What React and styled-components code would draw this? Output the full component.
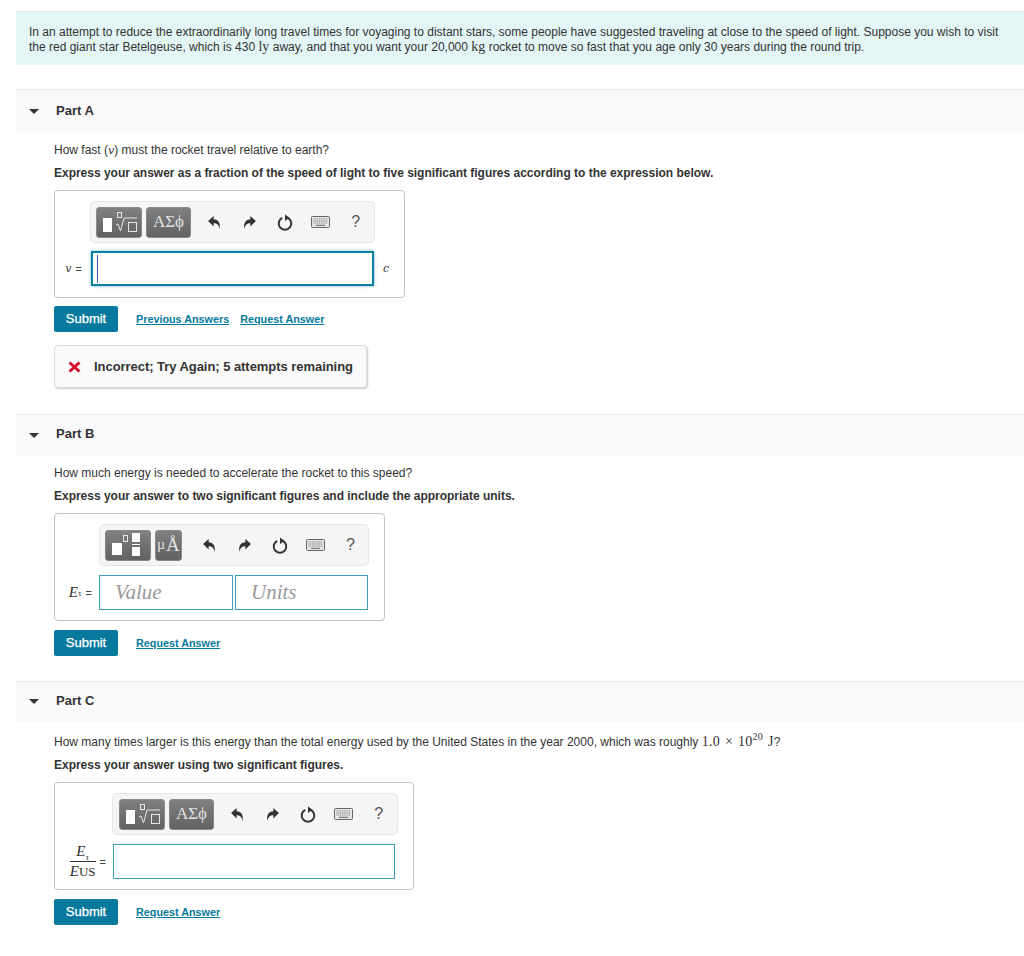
import React from "react";
import styled, { createGlobalStyle } from "styled-components";

const Global = createGlobalStyle`
  html, body { margin: 0; padding: 0; background: #fff; }
  body { font-family: "Liberation Sans", Arial, sans-serif; color: #333; font-size: 12px; }
`;

const Page = styled.div`
  padding: 11px 0 0 16px;
  height: 945px;
  overflow: hidden;
`;
const Intro = styled.div`
  background: #e4f5f6;
  border-top: 1px solid #dfe6e6;
  padding: 13px 24px 10px 13px;
  font-size: 12px;
  line-height: 15px;
  height: 30px;
  color: #333;
  white-space: nowrap;
`;
const Math = styled.span`
  font-family: "Liberation Serif", serif;
  font-size: 14px;
  line-height: 0;
`;
const MathExpr = styled(Math)`
  letter-spacing: 0.3px;
  word-spacing: 1px;
`;
const MathVar = styled.i`
  font-family: "DejaVu Serif", serif;
  font-size: 11px;
  line-height: 0;
`;
const Sup = styled.sup`
  font-size: 10px;
  line-height: 0;
`;
const PartSection = styled.section`
  margin-top: ${(p) => p.$top}px;
`;
const PartHeader = styled.div`
  box-sizing: border-box;
  display: flex;
  align-items: center;
  height: ${(p) => p.$height}px;
  background: #f9f9f9;
  border-top: 1px solid #ececec;
  padding: 0 0 ${(p) => p.$lift}px 13px;
  font-size: 13px;
  font-weight: bold;
  color: #333;
  gap: 17px;
`;
const Caret = styled.span`
  width: 0;
  height: 0;
  border-left: 5px solid transparent;
  border-right: 5px solid transparent;
  border-top: 5px solid #333;
  margin-top: 3px;
`;
const PartBody = styled.div`
  padding: ${(p) => p.$pad}px 0 0 38px;
`;
const Question = styled.p`
  margin: 0;
  font-size: 12px;
  line-height: 15px;
  white-space: nowrap;
`;
const Instruction = styled.p`
  margin: 8px 0 9px;
  font-size: 12px;
  line-height: 15px;
  font-weight: bold;
  letter-spacing: -0.015px;
  white-space: nowrap;
`;
const AnswerBox = styled.div`
  box-sizing: border-box;
  width: ${(p) => p.$width}px;
  height: 108px;
  border: 1px solid #c4c4c4;
  border-radius: 4px;
  padding: 10px 0 0 ${(p) => p.$left}px;
`;
const Toolbar = styled.div`
  box-sizing: border-box;
  display: flex;
  align-items: center;
  width: ${(p) => p.$width}px;
  height: 42px;
  padding-left: ${(p) => p.$pad}px;
  background: #f5f5f5;
  border: 1px solid #e6e6e6;
  border-radius: 5px;
`;
const TemplateButton = styled.div`
  box-sizing: border-box;
  display: flex;
  align-items: center;
  justify-content: center;
  width: ${(p) => p.$width}px;
  height: 31px;
  margin-right: 4px;
  border: 1px solid #8a8a8a;
  border-radius: 3px;
  background: linear-gradient(#808080, #626262);
  color: #e2e2e2;
  font-family: "Liberation Serif", serif;
  font-size: ${(p) => p.$size || 17}px;
  white-space: nowrap;
`;
const SmallMu = styled.span`
  font-size: 14px;
  margin-right: 1px;
`;
const Tools = styled.div`
  display: flex;
  align-items: center;
  margin-left: ${(p) => p.$gap}px;
`;
const Tool = styled.div`
  display: flex;
  align-items: center;
  justify-content: center;
  width: 35.25px;
  height: 24px;
  color: #333;
`;
const Help = styled.span`
  font-size: 16px;
  color: #555;
`;
const AnswerRow = styled.div`
  display: flex;
  align-items: center;
  margin-top: ${(p) => p.$top}px;
  height: 35px;
`;
const Label = styled.div`
  flex: none;
  display: flex;
  align-items: center;
  justify-content: flex-end;
  box-sizing: border-box;
  width: ${(p) => p.$width}px;
  margin-left: ${(p) => -p.$width}px;
  padding-right: ${(p) => p.$pad}px;
  font-family: "Liberation Serif", serif;
  font-size: 13px;
  color: #333;
  white-space: nowrap;
`;
const Equal = styled.span`
  margin-left: 4px;
  font-family: "Liberation Sans", sans-serif;
  font-size: 11px;
  color: #444;
`;
const MathItalic = styled.i`
  font-family: "DejaVu Serif", serif;
  font-size: 11px;
`;
const MathCap = styled.i`
  font-family: "Liberation Serif", serif;
  font-size: 15px;
`;
const Sub = styled.sub`
  font-size: 9px;
  line-height: 0;
`;
const Fraction = styled.span`
  display: inline-flex;
  flex-direction: column;
  align-items: center;
`;
const FracTop = styled.span`
  align-self: stretch;
  text-align: center;
  padding: 0 0 2px;
  border-bottom: 1px solid #333;
  line-height: 14px;
`;
const FracBottom = styled.span`
  padding: 2px 0 0;
  line-height: 14px;
`;
const Field = styled.div`
  box-sizing: border-box;
  display: flex;
  align-items: center;
  width: ${(p) => p.$width}px;
  height: 35px;
  margin-left: ${(p) => p.$left || 0}px;
  background: #fff;
  border: ${(p) => (p.$focus ? "2px solid #0b7ea3" : "1px solid #3f9db8")};
  box-shadow: ${(p) => (p.$focus ? "0 0 3px rgba(11,126,163,.6)" : "none")};
  padding-left: 15px;
  font-family: "Liberation Serif", serif;
  font-style: italic;
  font-size: 21px;
  color: #999;
`;
const TextCaret = styled.span`
  width: 1px;
  height: 28px;
  margin-left: -11px;
  background: #3a5fbf;
`;
const Unit = styled.i`
  margin-left: 9px;
  font-family: "DejaVu Serif", serif;
  font-size: 11px;
`;
const Actions = styled.div`
  display: flex;
  align-items: center;
  margin-top: ${(p) => p.$top}px;
`;
const Submit = styled.button`
  width: 64px;
  height: 26px;
  padding: 0 0 2px;
  border: 0;
  border-radius: 2px;
  background: #07799d;
  color: #fff;
  font-family: "Liberation Sans", sans-serif;
  font-size: 13px;
  -webkit-text-stroke: 0.25px #fff;
  margin-right: 18px;
`;
const LinkText = styled.a`
  margin-right: 11px;
  color: #07799d;
  font-size: 10.8px;
  font-weight: bold;
  text-decoration: underline;
`;
const Feedback = styled.div`
  box-sizing: border-box;
  display: flex;
  align-items: center;
  gap: 13px;
  width: 313px;
  height: 43px;
  margin-top: 13px;
  padding-left: 13px;
  background: #fafafa;
  border: 1px solid #dcdcdc;
  border-radius: 4px;
  box-shadow: 1px 1px 2px rgba(0, 0, 0, 0.2);
  font-size: 13px;
  font-weight: bold;
  letter-spacing: -0.05px;
  color: #333;
  white-space: nowrap;
`;

const Undo = ({ flip }) => (
  <svg width="15" height="15" viewBox="0 0 14 14" style={flip ? { transform: "scaleX(-1)" } : undefined}>
    <path d="M1 5.500 6.200 1v2.900c4.200 0 6.600 3.200 5.600 9.100-.8-3.700-2.500-5.300-5.600-5.300v3z" fill="#333" />
  </svg>
);
const Reset = () => (
  <svg width="16" height="17" viewBox="0 0 16 17">
    <path d="M5.200 3.900a6.300 6.300 0 1 0 5.600 0" fill="none" stroke="#333" strokeWidth="2" />
    <path d="M8 .5v6.500l4.500-3.300z" fill="#333" />
  </svg>
);
const Keyboard = () => (
  <svg width="19" height="12" viewBox="0 0 19 12">
    <rect x=".5" y=".5" width="18" height="11" rx="1" fill="#e6e6e6" stroke="#666" />
    <path d="M2.500 3h14M2.500 5h14M2.500 7h14" stroke="#777" strokeDasharray="1 .8" />
    <path d="M5 9.300h9" stroke="#666" />
  </svg>
);
const RootTemplate = () => (
  <svg width="44" height="29" viewBox="0 0 44 29">
    <rect x="6" y="10" width="9" height="14" fill="#fff" />
    <rect x="20.500" y="4.500" width="4" height="5" fill="none" stroke="#e6e6e6" />
    <path d="M19 17l2-1 2.500 7 3.500-13h13" fill="none" stroke="#e6e6e6" />
    <rect x="31.500" y="14.500" width="8" height="9" fill="none" stroke="#e6e6e6" />
  </svg>
);
const FractionTemplate = () => (
  <svg width="44" height="29" viewBox="0 0 44 29">
    <rect x="6" y="12" width="10" height="12" fill="#fff" />
    <rect x="17.500" y="4.500" width="4" height="6" fill="none" stroke="#e6e6e6" />
    <rect x="26" y="2" width="8" height="9" fill="#fff" />
    <rect x="26" y="13" width="8" height="1" fill="#fff" />
    <rect x="26" y="16" width="8" height="9" fill="#fff" />
  </svg>
);
const RedX = () => (
  <svg width="13" height="12" viewBox="0 0 13 12">
    <path d="M1.500 1.500l10 9M11.500 1.500l-10 9" stroke="#d40f2a" strokeWidth="3" />
  </svg>
);

const ToolbarTools = ({ gap }) => (
  <Tools $gap={gap}>
    <Tool><Undo /></Tool>
    <Tool><Undo flip /></Tool>
    <Tool><Reset /></Tool>
    <Tool><Keyboard /></Tool>
    <Tool><Help>?</Help></Tool>
  </Tools>
);

export default function App() {
  return (
    <>
      <Global />
      <Page>
        <Intro>
          In an attempt to reduce the extraordinarily long travel times for voyaging to distant stars, some people have suggested traveling at close to the speed of light. Suppose you wish to visit
          <br />
          the red giant star Betelgeuse, which is 430 <Math>ly</Math> away, and that you want your 20,000 <Math>kg</Math> rocket to move so fast that you age only 30 years during the round trip.
        </Intro>

        <PartSection $top={24}>
          <PartHeader $height={43} $lift={2}><Caret />Part A</PartHeader>
          <PartBody $pad={11}>
            <Question>How fast (<MathVar>v</MathVar>) must the rocket travel relative to earth?</Question>
            <Instruction>Express your answer as a fraction of the speed of light to five significant figures according to the expression below.</Instruction>
            <AnswerBox $width={351} $left={35}>
              <Toolbar $width={285} $pad={5}>
                <TemplateButton $width={46}><RootTemplate /></TemplateButton>
                <TemplateButton $width={45}>ΑΣϕ</TemplateButton>
                <ToolbarTools gap={2} />
              </Toolbar>
              <AnswerRow $top={8}>
                <Label $width={35} $pad={8}><MathItalic>v</MathItalic><Equal>=</Equal></Label>
                <Field $focus $width={283} $left={1}><TextCaret /></Field>
                <Unit>c</Unit>
              </AnswerRow>
            </AnswerBox>
            <Actions $top={8}>
              <Submit>Submit</Submit>
              <LinkText>Previous Answers</LinkText>
              <LinkText>Request Answer</LinkText>
            </Actions>
            <Feedback><RedX />Incorrect; Try Again; 5 attempts remaining</Feedback>
          </PartBody>
        </PartSection>

        <PartSection $top={26}>
          <PartHeader $height={42} $lift={4}><Caret />Part B</PartHeader>
          <PartBody $pad={10}>
            <Question>How much energy is needed to accelerate the rocket to this speed?</Question>
            <Instruction>Express your answer to two significant figures and include the appropriate units.</Instruction>
            <AnswerBox $width={331} $left={44}>
              <Toolbar $width={270} $pad={5}>
                <TemplateButton $width={46}><FractionTemplate /></TemplateButton>
                <TemplateButton $width={30} $size={19}><SmallMu>µ</SmallMu>Å</TemplateButton>
                <ToolbarTools gap={6} />
              </Toolbar>
              <AnswerRow $top={9}>
                <Label $width={44} $pad={7}><MathCap>E</MathCap><Sub>τ</Sub><Equal>=</Equal></Label>
                <Field $width={134}>Value</Field>
                <Field $width={133} $left={2}>Units</Field>
              </AnswerRow>
            </AnswerBox>
            <Actions $top={9}>
              <Submit>Submit</Submit>
              <LinkText>Request Answer</LinkText>
            </Actions>
          </PartBody>
        </PartSection>

        <PartSection $top={25}>
          <PartHeader $height={41} $lift={4}><Caret />Part C</PartHeader>
          <PartBody $pad={13}>
            <Question>How many times larger is this energy than the total energy used by the United States in the year 2000, which was roughly <MathExpr>1.0 × 10<Sup>20</Sup> J</MathExpr>?</Question>
            <Instruction>Express your answer using two significant figures.</Instruction>
            <AnswerBox $width={360} $left={57}>
              <Toolbar $width={286} $pad={6}>
                <TemplateButton $width={46}><RootTemplate /></TemplateButton>
                <TemplateButton $width={45}>ΑΣϕ</TemplateButton>
                <ToolbarTools gap={2} />
              </Toolbar>
              <AnswerRow $top={9}>
                <Label $width={58} $pad={6}>
                  <Fraction>
                    <FracTop><MathCap>E</MathCap><Sub>τ</Sub></FracTop>
                    <FracBottom><MathCap>E</MathCap>US</FracBottom>
                  </Fraction>
                  <Equal>=</Equal>
                </Label>
                <Field $width={282} $left={1} />
              </AnswerRow>
            </AnswerBox>
            <Actions $top={9}>
              <Submit>Submit</Submit>
              <LinkText>Request Answer</LinkText>
            </Actions>
          </PartBody>
        </PartSection>
      </Page>
    </>
  );
}
